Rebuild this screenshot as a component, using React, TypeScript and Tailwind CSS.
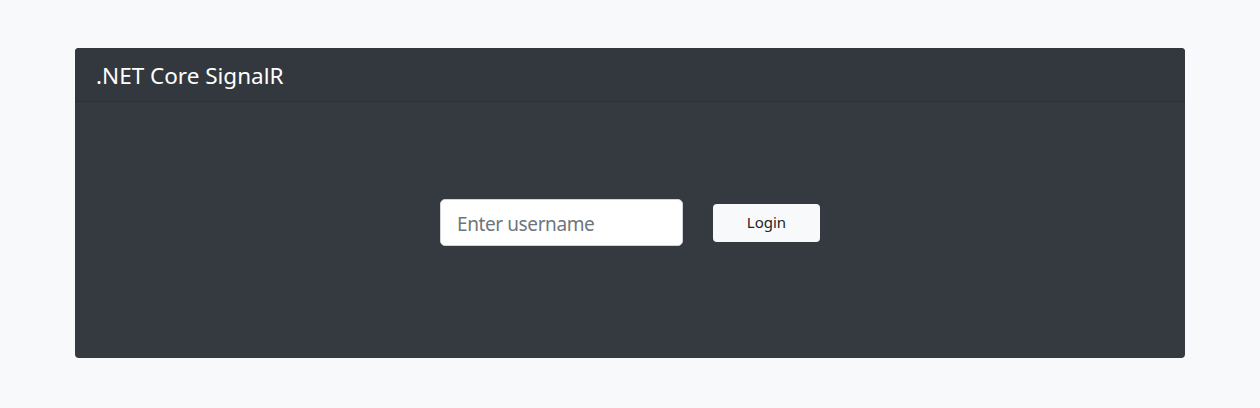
export default function App() {
  return (
    <div
      className="min-h-[408px] w-full bg-[#f8f9fa] pt-[48px] px-[75px]"
      style={{ fontFamily: '"Noto Sans", "Open Sans", sans-serif' }}
    >
      <div className="w-[1110px] rounded-[4px] bg-[#343a40] text-white overflow-hidden">
        <div className="h-[54px] border-b border-[#2c3136] bg-[#32383e] flex items-center px-[21px] pt-[2px]">
          <h5 className="text-[22.5px] leading-[26px] font-normal">.NET Core SignalR</h5>
        </div>
        <div className="h-[256px] flex justify-center items-start pt-[97px]">
          <div className="flex items-center gap-[30px]">
            <input
              type="text"
              placeholder="Enter username"
              className="w-[243px] h-[47px] rounded-[5px] border border-[#ced4da] bg-white px-[16px] pt-[2px] text-[19px] tracking-[-0.4px] text-[#495057] placeholder:text-[#6c757d] outline-none"
            />
            <button className="w-[107px] h-[38px] rounded-[4px] bg-[#f8f9fa] text-[15px] text-[#212529]">
              Login
            </button>
          </div>
        </div>
      </div>
    </div>
  );
}
